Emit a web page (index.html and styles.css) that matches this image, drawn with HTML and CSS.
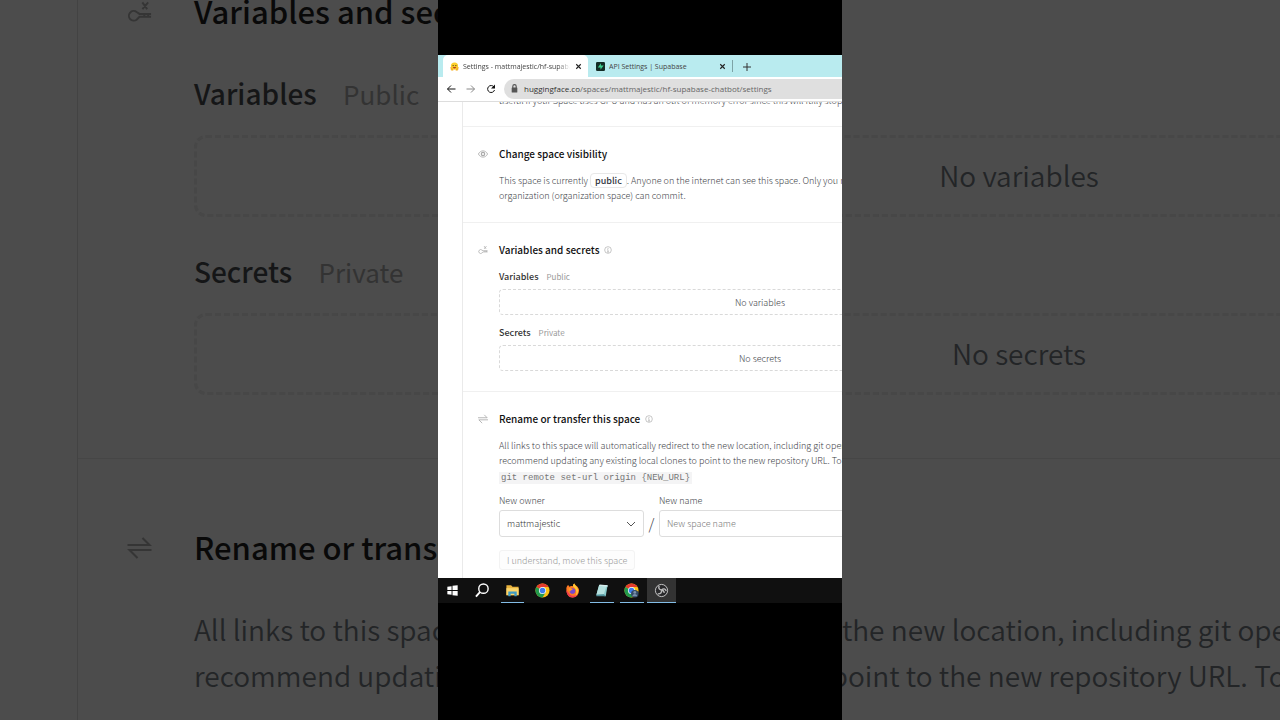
FILE: index.html
```html
<!DOCTYPE html>
<html lang="en">
<head>
    <meta charset="UTF-8">
    <title>Settings - mattmajestic/hf-supabase-chatbot</title>
    <link rel="stylesheet" href="styles.css">
</head>
<body>
<svg class="sprites" aria-hidden="true">
    <symbol id="i-key" viewBox="0 0 26 24">
        <path d="M10 12a5 5 0 1 0 0 8l3-3h12M10 12l3 2h12M16 2l5 7M22 2l-6 7M18 17v-3M22 17v-3" fill="none" stroke="currentColor" stroke-width="2"/>
    </symbol>
    <symbol id="i-swap" viewBox="0 0 24 24">
        <path d="M0 9h22L15 2M24 14H2l8 8" fill="none" stroke="currentColor" stroke-width="2"/>
    </symbol>
    <symbol id="i-eye" viewBox="0 0 24 24">
        <path d="M1 12c5-10 17-10 22 0c-5 10-17 10-22 0z" fill="none" stroke="currentColor" stroke-width="2"/>
        <circle cx="12" cy="12" r="4" fill="none" stroke="currentColor" stroke-width="3"/>
    </symbol>
    <symbol id="i-info" viewBox="0 0 24 24">
        <circle cx="12" cy="12" r="10" fill="none" stroke="currentColor" stroke-width="2"/>
        <path d="M12 6v3M10 11h2v7M9 18h6" fill="none" stroke="currentColor" stroke-width="2"/>
    </symbol>
    <symbol id="i-close" viewBox="0 0 8 8">
        <path d="M2 2l4 4M6 2L2 6" stroke="currentColor" fill="none"/>
    </symbol>
    <symbol id="i-chrome" viewBox="0 0 32 32">
        <circle cx="16" cy="16" r="15" fill="#fbc116"/>
        <path d="M16 16L3 8.500A15 15 0 0 1 29 8.500H16z" fill="#e33b2e"/>
        <path d="M3 8.500A15 15 0 0 0 16 31l6.500-11L16 16z" fill="#229a4c"/>
        <circle cx="16" cy="16" r="7.500" fill="#fff"/>
        <circle cx="16" cy="16" r="6" fill="#3b7ded"/>
    </symbol>
</svg>

<div class="stage">
    <!-- enlarged, dimmed copy of the page behind the video -->
    <div class="backdrop" aria-hidden="true">
        <div class="backdrop-page">
            <section class="big-section">
                <svg class="big-icon"><use href="#i-key"/></svg>
                <div class="big-body">
                    <h2>Variables and secrets</h2>
                    <h3>Variables <span>Public</span></h3>
                    <div class="big-empty">No variables</div>
                    <h3>Secrets <span>Private</span></h3>
                    <div class="big-empty">No secrets</div>
                </div>
            </section>
            <section class="big-section">
                <svg class="big-icon"><use href="#i-swap"/></svg>
                <div class="big-body">
                    <h2>Rename or transfer this space</h2>
                    <p>All links to this space will automatically redirect to the new location, including git operations.<br>
                    recommend updating any existing local clones to point to the new repository URL. To</p>
                </div>
            </section>
        </div>
    </div>

    <div class="video">
        <header class="browser">
            <div class="tabs">
                <div class="tab active">
                    <svg class="favicon" viewBox="0 0 20 20">
                        <circle cx="10" cy="9" r="8" fill="#fdcf2b"/>
                        <path d="M2 12l5 6H3zM18 12l-5 6h4z" fill="#f5ab1b" stroke="#f5ab1b" stroke-width="2"/>
                        <circle cx="7" cy="8" r="1.500" fill="#4c3a1c"/>
                        <circle cx="13" cy="8" r="1.500" fill="#4c3a1c"/>
                        <path d="M6 11h8q-4 7-8 0z" fill="#b23b25"/>
                    </svg>
                    <span class="tab-title">Settings - mattmajestic/hf-supabase</span>
                    <button aria-label="Close tab"><svg><use href="#i-close"/></svg></button>
                </div>
                <div class="tab">
                    <svg class="favicon" viewBox="0 0 20 20">
                        <rect width="20" height="20" rx="3" fill="#132b24"/>
                        <path d="M11 3L4 12h6v5l7-9h-6z" fill="#3ecf8e"/>
                    </svg>
                    <span class="tab-title">API Settings | Supabase</span>
                    <button aria-label="Close tab"><svg><use href="#i-close"/></svg></button>
                </div>
                <button class="new-tab" aria-label="New tab">
                    <svg viewBox="0 0 8 8"><path d="M4 0v8M0 4h8" stroke="currentColor"/></svg>
                </button>
            </div>
            <div class="toolbar">
                <button aria-label="Back"><svg viewBox="0 0 20 20"><path d="M19 10H3M10 3l-7 7l7 7" fill="none" stroke="#111" stroke-width="2"/></svg></button>
                <button aria-label="Forward"><svg viewBox="0 0 20 20"><path d="M1 10h16M10 3l7 7l-7 7" fill="none" stroke="#888" stroke-width="2"/></svg></button>
                <button aria-label="Reload"><svg viewBox="0 0 20 20"><path d="M16 6a7 7 0 1 0 1 6" fill="none" stroke="#111" stroke-width="2"/><path d="M18 1v8h-8z" fill="#111"/></svg></button>
                <div class="address">
                    <svg viewBox="0 0 12 16"><path d="M3 7V4a3 3 0 0 1 6 0v3" fill="none" stroke="#555" stroke-width="2"/><rect x="1" y="6" width="10" height="9" rx="1" fill="#555"/></svg>
                    <span><b>huggingface.co</b>/spaces/mattmajestic/hf-supabase-chatbot/settings</span>
                </div>
            </div>
        </header>

        <main class="page">
            <div class="panel">
                <section class="section cut">
                    <p>useful if your Space uses GPU and has an out of memory error since this will fully stop</p>
                </section>

                <section class="section">
                    <svg class="icon"><use href="#i-eye"/></svg>
                    <div class="body">
                        <h2>Change space visibility</h2>
                        <p>This space is currently <span class="badge">public</span>. Anyone on the internet can see this space. Only you members<br>
                        organization (organization space) can commit.</p>
                    </div>
                </section>

                <section class="section">
                    <svg class="icon"><use href="#i-key"/></svg>
                    <div class="body">
                        <h2>Variables and secrets <svg class="info"><use href="#i-info"/></svg></h2>
                        <h3>Variables <span>Public</span></h3>
                        <div class="empty">No variables</div>
                        <h3>Secrets <span>Private</span></h3>
                        <div class="empty">No secrets</div>
                    </div>
                </section>

                <section class="section">
                    <svg class="icon"><use href="#i-swap"/></svg>
                    <div class="body">
                        <h2>Rename or transfer this space <svg class="info"><use href="#i-info"/></svg></h2>
                        <p>All links to this space will automatically redirect to the new location, including git operations.<br>
                        recommend updating any existing local clones to point to the new repository URL. To</p>
                        <code>git remote set-url origin {NEW_URL}</code>
                        <form onsubmit="return false">
                            <div class="fields">
                                <div class="field">
                                    <label for="owner">New owner</label>
                                    <div class="select">
                                        <select id="owner"><option>mattmajestic</option></select>
                                        <svg viewBox="0 0 10 10"><path d="M1 3l4 4l4-4" fill="none" stroke="#555"/></svg>
                                    </div>
                                </div>
                                <span class="slash">/</span>
                                <div class="field wide">
                                    <label for="name">New name</label>
                                    <input id="name" type="text" placeholder="New space name">
                                </div>
                            </div>
                            <button class="submit" disabled>I understand, move this space</button>
                        </form>
                    </div>
                </section>
            </div>
        </main>

        <footer class="taskbar">
            <nav class="apps">
                <button aria-label="Start">
                    <svg viewBox="0 0 32 32"><path d="M5 8l9-1v8H5zM16 6l11-1v10H16zM5 17h9v8l-9-1zM16 17h11v10l-11-1z" fill="#fff"/></svg>
                </button>
                <button aria-label="Search">
                    <svg viewBox="0 0 32 32"><circle cx="18" cy="12" r="10" fill="none" stroke="#fff" stroke-width="3"/><path d="M11 19L2 29" stroke="#fff" stroke-width="4"/></svg>
                </button>
                <button class="open" aria-label="File Explorer">
                    <svg viewBox="0 0 32 32"><path d="M3 5h10l3 3h13v18H3z" fill="#e9b23c"/><path d="M3 11h26v15H3z" fill="#fbd56b"/><path d="M7 18h18v10h-5v-5h-8v5H7z" fill="#3f9bc4"/></svg>
                </button>
                <button aria-label="Chrome"><svg><use href="#i-chrome"/></svg></button>
                <button aria-label="Firefox">
                    <svg viewBox="0 0 32 32">
                        <path d="M3 14C2 9 5 5 7 4l2 4c3-2 5-2 8-1c0-3 1-5 3-6c1 4 9 6 10 14c0 9-6 16-14 16S3 24 3 14z" fill="#ff7a24"/>
                        <path d="M20 1c1 5 8 7 8 15c0 6-3 10-7 12c7-8 2-16-4-21c0-3 1-5 3-6z" fill="#ffca32"/>
                        <path d="M3 15c0 9 5 16 13 16c6 0 10-3 12-7c-5 4-15 5-19-1z" fill="#f0394e"/>
                        <circle cx="16" cy="17" r="6" fill="#7549cf"/>
                        <path d="M8 11c4-1 5 1 9 2c-2 3-5 2-6 5c-2-1-4-4-3-7z" fill="#ff9a26"/>
                    </svg>
                </button>
                <button class="open" aria-label="Notepad">
                    <svg viewBox="0 0 32 32"><path d="M11 4l18 1l-4 23l-20-2z" fill="#87c9ca"/><path d="M11 4l16 1l-6 19l-16 1z" fill="#b5e1df"/><path d="M5 25l16-1l4 4l-20 0z" fill="#508f98"/><path d="M12 3l17 2v3l-18-2z" fill="#d6eeee"/></svg>
                </button>
                <button class="open" aria-label="Chrome profile">
                    <svg viewBox="0 0 32 32"><use href="#i-chrome"/><circle cx="23" cy="23" r="8" fill="#354a65"/><circle cx="23" cy="20" r="3" fill="#7890ad"/><path d="M18 28c0-6 10-6 10 0z" fill="#7890ad"/></svg>
                </button>
                <button class="open current" aria-label="OBS">
                    <svg viewBox="0 0 32 32"><circle cx="16" cy="16" r="13" fill="#29292b" stroke="#ccc" stroke-width="2"/><path d="M11 6c-2 5 0 8 5 9c4-4 8-3 10 2M16 15c1 5-2 9-8 8M22 21c-1-4-3-6-6-6" fill="none" stroke="#bbb" stroke-width="3"/></svg>
                </button>
            </nav>
        </footer>
    </div>
</div>
</body>
</html>
```

FILE: styles.css
```css
* {
    box-sizing: border-box;
}

body {
    margin: 0;
    background-color: #000;
    font-family: "Noto Sans CJK SC", "Noto Sans", sans-serif;
}

h2, h3, p {
    margin: 0;
}

button {
    border: none;
    padding: 0;
    background: none;
    font-family: inherit;
}

.sprites {
    display: none;
}

/* backdrop and video share one row, the video sits on top */
.stage {
    display: grid;
    grid-template-columns: 438fr 404fr 438fr;
    grid-template-rows: 100vh;
    overflow: hidden;
}

.backdrop {
    grid-area: 1 / 1 / 2 / 4;
    min-width: 0;
    overflow: hidden;
    background-color: #4c4c4c;
    color: #232527;
    font-size: 28px;
    font-weight: 350;
    line-height: 46px;
    white-space: nowrap;
}

.backdrop-page {
    width: 1900px;
    margin-top: -14px;
    margin-left: 77px;
    border-left: 1px solid #434343;
}

.big-section {
    display: flex;
    gap: 42px;
    padding: 0 0 63px 49px;
}

.big-section + .big-section {
    padding-top: 63px;
    border-top: 1px solid #464646;
}

.big-icon {
    width: 25px;
    height: 24px;
    margin-top: 14px;
    color: #353535;
}

.big-body {
    width: 1650px;
}

.big-body h2 {
    color: #090909;
    font-size: 31px;
    font-weight: 500;
    line-height: 50px;
    margin-bottom: 34px;
}

.big-body h3 {
    color: #151617;
    font-size: 28px;
    font-weight: 500;
    margin-bottom: 18px;
}

.big-body h3 span {
    margin-left: 20px;
    color: #333;
    font-size: 26px;
    font-weight: 400;
}

.big-empty {
    padding: 14px 15px 16px;
    border: 3px dashed #474747;
    border-radius: 12px;
    text-align: center;
}

.big-empty + h3 {
    margin-top: 31px;
}

.video {
    grid-area: 1 / 2 / 2 / 3;
    z-index: 1;
    display: flex;
    flex-direction: column;
    min-width: 0;
    overflow: hidden;
    padding: 55px 0 117px;
    background-color: #000;
}

/* browser chrome */
.browser {
    flex: none;
    background-color: #fff;
    border-bottom: 1px solid #ddd;
    color: #444;
    font-family: "Open Sans", sans-serif;
}

.tabs {
    display: flex;
    height: 22px;
    padding-left: 5px;
    background-color: #b9ebef;
    font-size: 7px;
}

.tab {
    display: flex;
    align-items: center;
    gap: 4px;
    width: 145px;
    padding: 0 5px 0 7px;
    border-radius: 5px 5px 0 0;
}

.tab.active {
    background-color: #fff;
}

.tab:not(.active) {
    padding-left: 8px;
    border-right: 1px solid #7da3a6;
    border-radius: 0;
    height: 12px;
    margin-top: 5px;
}

.favicon {
    flex: none;
    width: 9px;
    height: 9px;
}

.tab-title {
    flex: 1;
    overflow: hidden;
    white-space: nowrap;
}

.active .tab-title {
    mask-image: linear-gradient(to left, transparent, #000 12px);
}

.tab button {
    display: flex;
    color: #222;
}

.tab svg {
    width: 9px;
    height: 9px;
}

.new-tab {
    width: 28px;
    color: #333;
}

.new-tab svg {
    width: 8px;
    height: 8px;
}

.toolbar {
    display: flex;
    align-items: center;
    height: 24px;
    padding: 0 0 1px 3px;
}

.toolbar button {
    display: flex;
    justify-content: center;
    width: 20px;
}

.toolbar button svg {
    width: 10px;
    height: 10px;
}

.address {
    display: flex;
    align-items: center;
    gap: 6px;
    flex: 1;
    height: 20px;
    margin-left: 3px;
    padding-left: 7px;
    border-radius: 10px 0 0 10px;
    background-color: #dfdfdf;
    color: #666;
    font-size: 8px;
    white-space: nowrap;
}

.address svg {
    width: 7px;
    height: 9px;
}

.address b {
    color: #333;
    font-weight: 400;
}

/* settings page, wider than the part that is in view */
.page {
    flex: 1;
    min-height: 0;
    overflow: hidden;
    background-color: #fff;
    color: #3c4046;
    font-size: 9px;
    font-weight: 300;
    line-height: 15px;
    white-space: nowrap;
}

.panel {
    width: 600px;
    min-height: 100%;
    margin-left: 24px;
    border-left: 1px solid #eaeaea;
}

.section {
    display: flex;
    gap: 11px;
    padding: 19px 0 19px 15px;
    border-top: 1px solid #f0f0f0;
}

.section.cut {
    align-items: flex-end;
    height: 24px;
    padding: 0 0 18px 36px;
    border-top: none;
}

.icon {
    flex: none;
    width: 10px;
    height: 10px;
    margin-top: 3px;
    color: #aaa;
}

.body {
    width: 522px;
}

.body h2 {
    display: flex;
    align-items: center;
    gap: 5px;
    margin-bottom: 11px;
    color: #111;
    font-size: 10px;
    font-weight: 500;
    line-height: 16px;
}

.info {
    width: 8px;
    height: 8px;
    color: #aaa;
}

.body h3 {
    margin-bottom: 4px;
    color: #333;
    font-size: 9px;
    font-weight: 500;
    line-height: 16px;
}

.body h3 span {
    margin-left: 6px;
    color: #999;
    font-size: 8px;
    font-weight: 400;
}

.badge {
    padding: 0 4px;
    border: 1px solid #e8e8e8;
    border-radius: 4px;
    color: #333844;
    font-weight: 500;
}

.empty {
    margin-bottom: 1px;
    padding: 5px 4px 4px;
    border: 1px dashed #d9d9d9;
    border-radius: 4px;
    text-align: center;
}

.empty + h3 {
    margin-top: 10px;
}

code {
    display: inline-block;
    margin: 4px 0;
    padding: 0 2px;
    background-color: #f4f4f5;
    color: #777;
    font-family: "Liberation Mono", monospace;
    font-size: 9px;
    line-height: 12px;
}

.fields {
    display: flex;
    align-items: flex-end;
    margin-top: 5px;
}

.field {
    display: flex;
    flex-direction: column;
    gap: 2px;
    width: 145px;
}

.field.wide {
    width: 362px;
}

.select {
    display: grid;
    align-items: center;
}

.select select, .select svg {
    grid-area: 1 / 1;
}

.select svg {
    justify-self: end;
    width: 10px;
    height: 10px;
    margin-right: 8px;
    pointer-events: none;
}

select, input {
    appearance: none;
    width: 100%;
    height: 27px;
    padding: 0 7px;
    border: 1px solid #ddd;
    border-radius: 3px;
    background-color: #fff;
    color: #333;
    font-family: inherit;
    font-size: 9px;
    font-weight: 300;
}

input::placeholder {
    color: #777;
}

.slash {
    width: 15px;
    font-size: 15px;
    line-height: 27px;
    text-align: center;
}

.submit {
    height: 20px;
    margin-top: 13px;
    padding: 0 7px;
    border: 1px solid #f3f3f3;
    border-radius: 3px;
    background-color: #fdfdfd;
    color: #999;
    font-size: 9px;
    font-weight: 300;
}

/* windows taskbar */
.taskbar {
    flex: none;
    height: 25px;
    background-color: #101010;
}

.apps {
    display: grid;
    grid-template-columns: repeat(8, 1fr);
    width: 59%;
    height: 100%;
}

.apps button {
    display: flex;
    align-items: center;
    justify-content: center;
    margin: 0 3px;
    border-bottom: 1px solid transparent;
}

.apps svg {
    width: 15px;
    height: 15px;
}

.apps .open {
    border-bottom-color: #83bce6;
}

.apps .current {
    margin: 0;
    background-color: #333;
}
```
